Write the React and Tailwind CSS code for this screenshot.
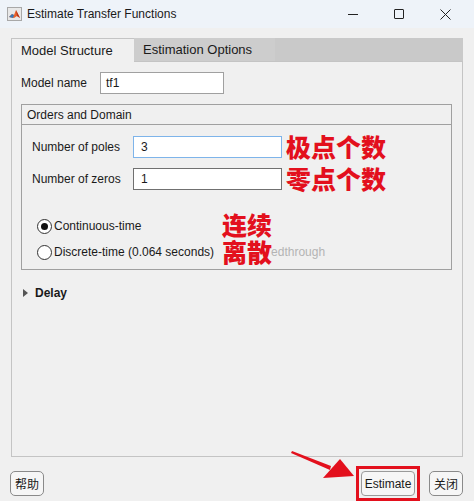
import React from "react";

const sans = { fontFamily: '"Liberation Sans", Arial, sans-serif' };
const cjk = { fontFamily: '"Noto Sans CJK SC", "Noto Sans", sans-serif' };

function MatlabIcon() {
  return (
    <div className="w-[15px] h-[14px] border border-[#a8a8a8] bg-[#e8e8e8] flex items-center justify-center">
      <svg width="11" height="10" viewBox="0 0 11 10">
        <path d="M0 8 L3 5 L5 6 L7 1 L11 9 L8 7 L5 9 Z" fill="#e8632b" />
        <path d="M0 8 L3 5 L5 6 L4 9 Z" fill="#3a78b5" />
        <path d="M7 1 L11 9 L8 7 Z" fill="#b8331a" />
      </svg>
    </div>
  );
}

function Radio({ checked, label }) {
  return (
    <div className="flex items-center h-[16px]">
      <div className="w-[15px] h-[15px] rounded-full border border-[#333] bg-white flex items-center justify-center ml-[16px]">
        {checked && <div className="w-[7px] h-[7px] rounded-full bg-[#111]" />}
      </div>
      <span className="ml-[2px] text-[12px] text-[#1a1a1a]">{label}</span>
    </div>
  );
}

export default function App() {
  return (
    <div className="relative w-[474px] h-[501px] overflow-hidden bg-[#f0f0f0]" style={sans}>
      {/* Title bar */}
      <div className="h-[28px] bg-[#eef3f9] flex items-center">
        <div className="ml-[7px]">
          <MatlabIcon />
        </div>
        <span className="ml-[5px] text-[12px] text-[#1a1a1a]">Estimate Transfer Functions</span>
        <div className="ml-auto flex items-center h-full">
          <div className="w-[46px] h-full flex items-center justify-center">
            <div className="w-[10px] h-px bg-[#222]" />
          </div>
          <div className="w-[46px] h-full flex items-center justify-center">
            <div className="w-[10px] h-[10px] border border-[#222] rounded-[1px]" />
          </div>
          <div className="w-[46px] h-full flex items-center justify-center mr-[6px]">
            <svg width="11" height="11" viewBox="0 0 11 11">
              <path d="M0.5 0.5 L10.5 10.5 M10.5 0.5 L0.5 10.5" stroke="#222" strokeWidth="1" />
            </svg>
          </div>
        </div>
      </div>

      {/* Body */}
      <div className="pl-[11px] pr-[11px] pt-[10px]">
        {/* Tabs */}
        <div className="flex h-[24px]">
          <div className="w-[123px] border-l border-t border-[#c4c4c4] bg-[#f0f0f0] flex items-center pl-[9px] text-[13px] text-[#1a1a1a]">
            Model Structure
          </div>
          <div className="flex-1 bg-[#c9c9c9] flex items-center border-b border-[#c4c4c4]">
            <div className="w-[141px] h-full bg-[#cdcdcd] flex items-center pl-[9px] text-[13px] text-[#1a1a1a]">
              Estimation Options
            </div>
          </div>
        </div>

        {/* Panel */}
        <div className="h-[395px] border-l border-r border-b border-[#c4c4c4] px-[9px] pt-[10px]">
          <div className="flex items-center h-[22px]">
            <span className="text-[12px] text-[#1a1a1a] w-[79px]">Model name</span>
            <div className="w-[124px] h-[22px] bg-white border border-[#a0a0a0] flex items-center pl-[5px] text-[12px] text-[#1a1a1a]">
              tf1
            </div>
          </div>

          {/* Group box */}
          <div className="mt-[10px] w-[431px] h-[166px] border border-[#a0a0a0]">
            <div className="h-[20px] border-b border-[#a0a0a0] flex items-center pl-[5px] text-[12px] text-[#1a1a1a]">
              Orders and Domain
            </div>
            <div className="pl-[10px] pt-[11px]">
              <div className="flex items-center h-[22px]">
                <span className="text-[12px] text-[#1a1a1a] w-[101px]">Number of poles</span>
                <div className="w-[149px] h-[22px] bg-white border border-[#7eb4ea] flex items-center pl-[7px] text-[12px] text-[#1a1a1a]">
                  3
                </div>
              </div>
              <div className="flex items-center h-[22px] mt-[10px]">
                <span className="text-[12px] text-[#1a1a1a] w-[101px]">Number of zeros</span>
                <div className="w-[149px] h-[22px] bg-white border border-[#707070] flex items-center pl-[7px] text-[12px] text-[#1a1a1a]">
                  1
                </div>
              </div>
            </div>
            <div className="mt-[28px] -ml-px">
              <Radio checked label="Continuous-time" />
              <div className="flex items-center mt-[9px]">
                <Radio label="Discrete-time (0.064 seconds)" />
                <span className="ml-[57px] text-[12px] text-[#b4b4b4]">edthrough</span>
              </div>
            </div>
          </div>

          {/* Delay */}
          <div className="flex items-center h-[16px] mt-[15px] pl-[2px]">
            <svg width="5" height="8" viewBox="0 0 5 8">
              <path d="M0 0 L5 4 L0 8 Z" fill="#555" />
            </svg>
            <span className="ml-[7px] text-[12px] font-bold text-[#1a1a1a]">Delay</span>
          </div>
        </div>

        {/* Buttons */}
        <div className="flex items-center mt-[9px] -ml-px">
          <div className="w-[34px] h-[25px] border-[1.5px] border-[#8a8a8a] rounded-[5px] bg-[#f6f6f6] flex items-center justify-center text-[12px] text-[#1a1a1a]" style={cjk}>
            帮助
          </div>
          <div className="ml-auto p-[2px] border-[3px] border-[#e3101d]">
            <div className="w-[54px] h-[25px] border border-[#9a9a9a] rounded-[4px] bg-[#f6f6f6] flex items-center justify-center text-[12px] text-[#1a1a1a]">
              Estimate
            </div>
          </div>
          <div className="ml-[9px] w-[34px] h-[25px] border-[1.5px] border-[#8a8a8a] rounded-[5px] bg-[#f6f6f6] flex items-center justify-center text-[12px] text-[#1a1a1a]" style={cjk}>
            关闭
          </div>
        </div>
      </div>

      {/* Annotations */}
      <div className="absolute left-[286px] top-[133px] text-[25px] leading-[26px] font-black text-[#e3101d]" style={cjk}>极点个数</div>
      <div className="absolute left-[286px] top-[165px] text-[25px] leading-[26px] font-black text-[#e3101d]" style={cjk}>零点个数</div>
      <div className="absolute left-[222px] top-[211px] text-[25px] leading-[26px] font-black text-[#e3101d]" style={cjk}>连续</div>
      <div className="absolute left-[222px] top-[238px] text-[25px] leading-[26px] font-black text-[#e3101d]" style={cjk}>离散</div>
      <svg className="absolute left-0 top-0" width="474" height="501" viewBox="0 0 474 501">
        <path d="M292 451 L331 466 L330 470 L291 453 Z" fill="#e3101d" />
        <path d="M340 459 L354 476 L323 478 Z" fill="#e3101d" />
      </svg>
    </div>
  );
}
